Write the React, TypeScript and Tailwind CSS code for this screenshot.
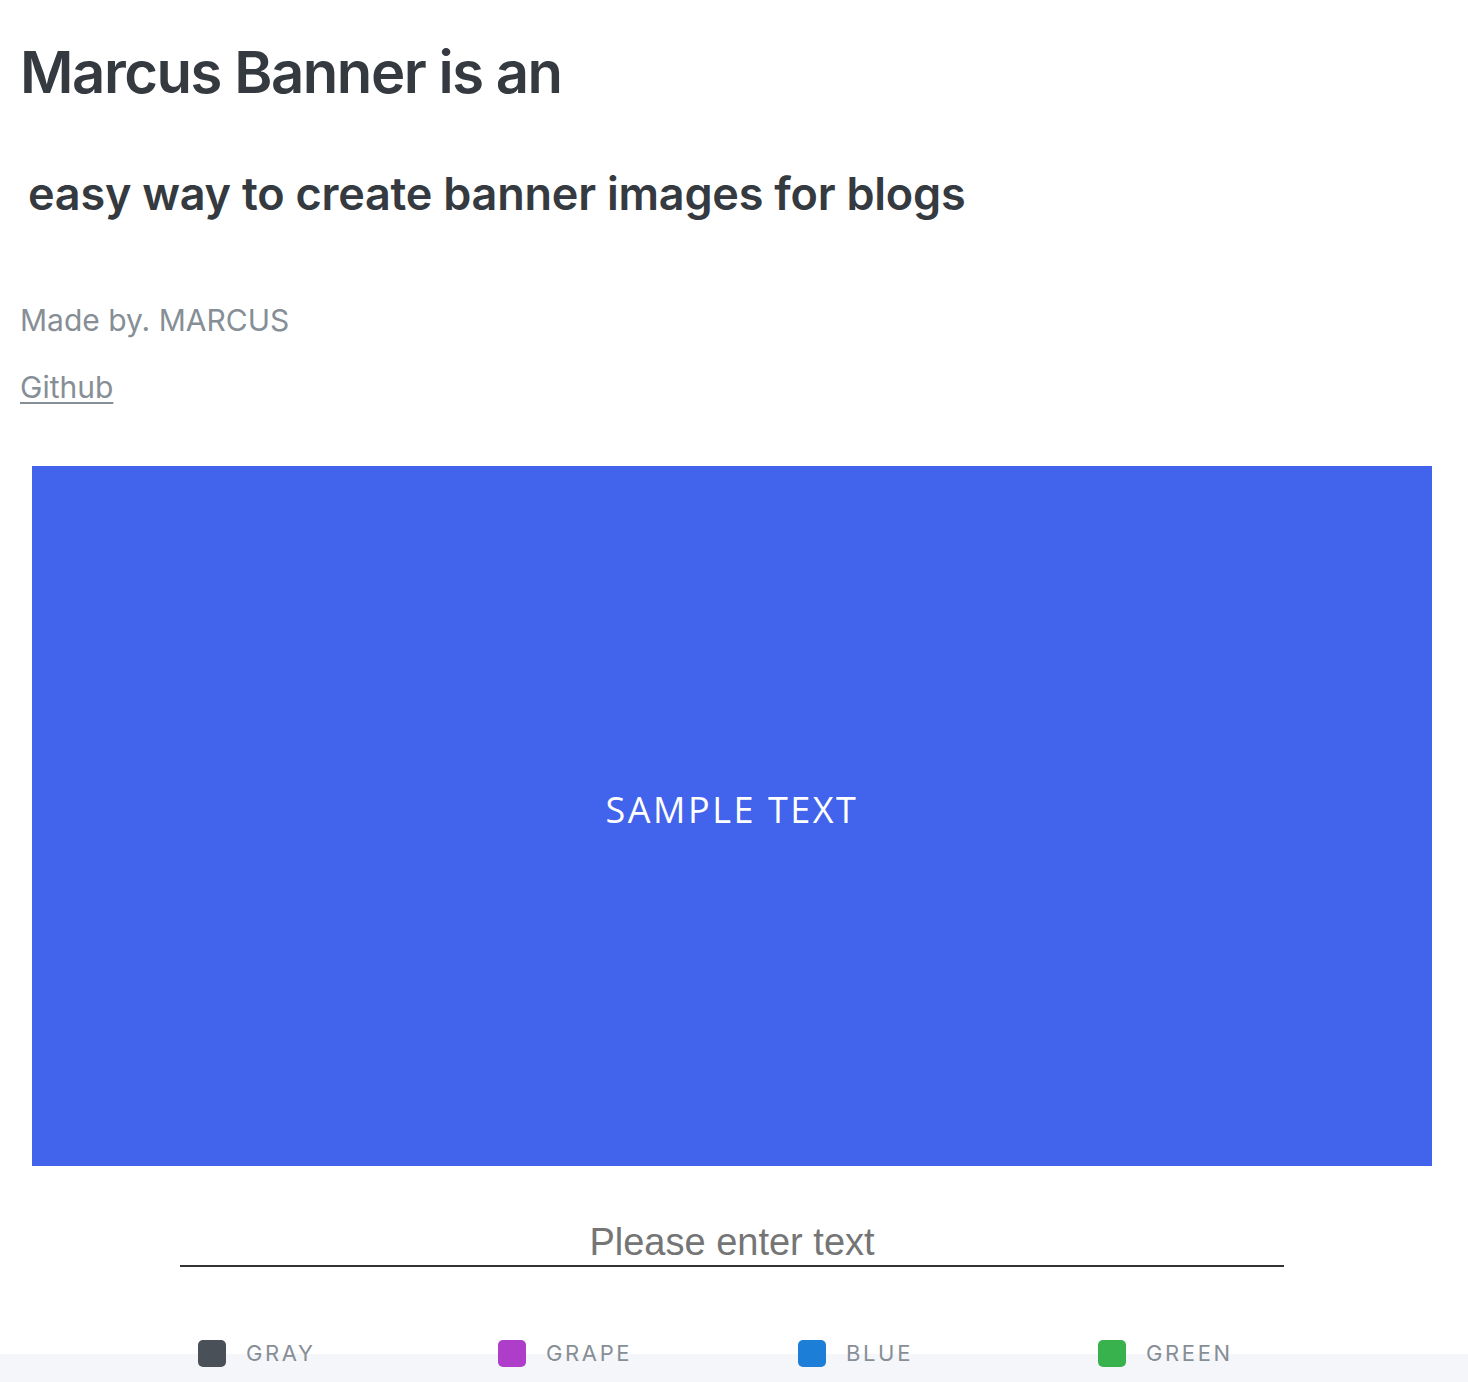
import React from "react";

const colors = [
  { name: "GRAY", bg: "bg-[#495057]" },
  { name: "GRAPE", bg: "bg-[#ae3ec9]" },
  { name: "BLUE", bg: "bg-[#1c7ed6]" },
  { name: "GREEN", bg: "bg-[#37b24d]" },
];

export default function App() {
  return (
    <div className="min-h-[1382px] w-[1468px] bg-[linear-gradient(to_bottom,#ffffff_1354px,#f4f6f9_1354px)] font-['Inter',sans-serif]">
      <div className="flex flex-col">
        <h1 className="ml-[20px] mt-[43px] text-[58px] leading-none font-semibold text-[#343a40] tracking-[-0.025em]">
          Marcus Banner is an
        </h1>
        <h2 className="ml-[28px] mt-[70px] text-[45px] leading-none font-semibold text-[#343a40] tracking-[-0.005em]">
          easy way to create banner images for blogs
        </h2>
        <p className="ml-[20px] mt-[89px] text-[30px] leading-none text-[#868e96]">
          Made by. MARCUS
        </p>
        <div className="ml-[20px] mt-[37px]">
          <a href="#" className="text-[30px] leading-none text-[#868e96] underline underline-offset-[4px] decoration-[1.5px]">
            Github
          </a>
        </div>
        <div className="ml-[32px] mt-[62px] w-[1400px] h-[700px] bg-[#4263eb] flex items-center justify-center pb-[12px]">
          <span className="font-['Open_Sans',sans-serif] text-[36px] text-white tracking-[0.07em]">
            SAMPLE TEXT
          </span>
        </div>
        <div className="mt-[53px] flex">
          <input
            placeholder="Please enter text"
            className="ml-[180px] w-[1104px] h-[48px] border-b-2 border-[#333333] outline-none text-center font-['Liberation_Sans',sans-serif] text-[38px] leading-none placeholder:text-[#757575] bg-transparent"
          />
        </div>
        <div className="ml-[198px] mt-[73px] flex">
          {colors.map((c) => (
            <div key={c.name} className="w-[300px] flex items-center gap-[20px]">
              <div className={`w-[28px] h-[27px] rounded-[5px] ${c.bg}`} />
              <span className="text-[22px] leading-none text-[#868e96] tracking-[0.12em] -translate-y-[1px]">
                {c.name}
              </span>
            </div>
          ))}
        </div>
      </div>
    </div>
  );
}
